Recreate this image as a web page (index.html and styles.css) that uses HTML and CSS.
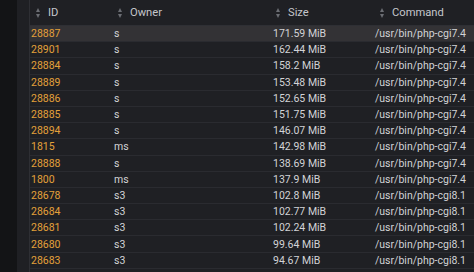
FILE: index.html
```html
<!DOCTYPE html>
<html>
<head>
<meta charset="utf-8">
<link rel="stylesheet" href="styles.css">
</head>
<body>
<div class="shell">
  <div class="gutter"></div>
  <div class="panel">
    <div class="table">
      <div class="row head">
        <div class="c id"><span class="sort"></span>ID</div>
        <div class="c owner"><span class="sort"></span>Owner</div>
        <div class="c size"><span class="sort"></span>Size</div>
        <div class="c cmd"><span class="sort"></span>Command</div>
      </div>
      <div class="row hl"><div class="c id">28887</div><div class="c owner">s</div><div class="c size">171.59 MiB</div><div class="c cmd">/usr/bin/php-cgi7.4</div></div>
      <div class="row"><div class="c id">28901</div><div class="c owner">s</div><div class="c size">162.44 MiB</div><div class="c cmd">/usr/bin/php-cgi7.4</div></div>
      <div class="row"><div class="c id">28884</div><div class="c owner">s</div><div class="c size">158.2 MiB</div><div class="c cmd">/usr/bin/php-cgi7.4</div></div>
      <div class="row"><div class="c id">28889</div><div class="c owner">s</div><div class="c size">153.48 MiB</div><div class="c cmd">/usr/bin/php-cgi7.4</div></div>
      <div class="row"><div class="c id">28886</div><div class="c owner">s</div><div class="c size">152.65 MiB</div><div class="c cmd">/usr/bin/php-cgi7.4</div></div>
      <div class="row"><div class="c id">28885</div><div class="c owner">s</div><div class="c size">151.75 MiB</div><div class="c cmd">/usr/bin/php-cgi7.4</div></div>
      <div class="row"><div class="c id">28894</div><div class="c owner">s</div><div class="c size">146.07 MiB</div><div class="c cmd">/usr/bin/php-cgi7.4</div></div>
      <div class="row"><div class="c id">1815</div><div class="c owner">ms</div><div class="c size">142.98 MiB</div><div class="c cmd">/usr/bin/php-cgi7.4</div></div>
      <div class="row"><div class="c id">28888</div><div class="c owner">s</div><div class="c size">138.69 MiB</div><div class="c cmd">/usr/bin/php-cgi7.4</div></div>
      <div class="row"><div class="c id">1800</div><div class="c owner">ms</div><div class="c size">137.9 MiB</div><div class="c cmd">/usr/bin/php-cgi7.4</div></div>
      <div class="row"><div class="c id">28678</div><div class="c owner">s3</div><div class="c size">102.8 MiB</div><div class="c cmd">/usr/bin/php-cgi8.1</div></div>
      <div class="row"><div class="c id">28684</div><div class="c owner">s3</div><div class="c size">102.77 MiB</div><div class="c cmd">/usr/bin/php-cgi8.1</div></div>
      <div class="row"><div class="c id">28681</div><div class="c owner">s3</div><div class="c size">102.24 MiB</div><div class="c cmd">/usr/bin/php-cgi8.1</div></div>
      <div class="row"><div class="c id">28680</div><div class="c owner">s3</div><div class="c size">99.64 MiB</div><div class="c cmd">/usr/bin/php-cgi8.1</div></div>
      <div class="row"><div class="c id">28683</div><div class="c owner">s3</div><div class="c size">94.67 MiB</div><div class="c cmd">/usr/bin/php-cgi8.1</div></div>
    </div>
  </div>
</div>
</body>
</html>
```
FILE: styles.css
```css
html, body {
  margin: 0;
  padding: 0;
  background: #131416;
  font-family: Roboto, "Liberation Sans", sans-serif;
  overflow: hidden;
}
.shell {
  display: flex;
  width: 474px;
  height: 272px;
}
.gutter {
  width: 17px;
  flex: none;
}
.panel {
  flex: 1;
  background: #1f2024;
  padding-left: 12px;
}
.table {
  border-left: 1px solid #2e2f34;
  height: 100%;
}
.row {
  display: grid;
  grid-template-columns: 83px 159px 102px 1fr;
  height: 16.2px;
  align-items: center;
  border-bottom: 1px solid #2a2b30;
  box-sizing: border-box;
  font-size: 10.5px;
  color: #d2d3d6;
  white-space: nowrap;
}
.row.head {
  height: 26px;
  font-size: 11.2px;
  color: #c4c6cb;
  border-bottom: 1px solid #2e2f34;
}
.row.hl {
  background: #333235;
}
.c {
  padding-left: 1px;
  display: flex;
  align-items: center;
}
.id {
  color: #e3a03a;
}
.head .c {
  color: #c4c6cb;
}
.head .id { padding-left: 6px; }
.head .owner { padding-left: 5px; }
.head .size { padding-left: 4px; }
.head .cmd { padding-left: 6px; }
.sort {
  position: relative;
  width: 5px;
  height: 10px;
  margin-right: 7px;
  flex: none;
}
.sort::before, .sort::after {
  content: "";
  position: absolute;
  left: 0;
  border-left: 2.5px solid transparent;
  border-right: 2.5px solid transparent;
}
.sort::before {
  top: 0;
  border-bottom: 4px solid #6b6d73;
}
.sort::after {
  bottom: 0;
  border-top: 4px solid #6b6d73;
}
```
